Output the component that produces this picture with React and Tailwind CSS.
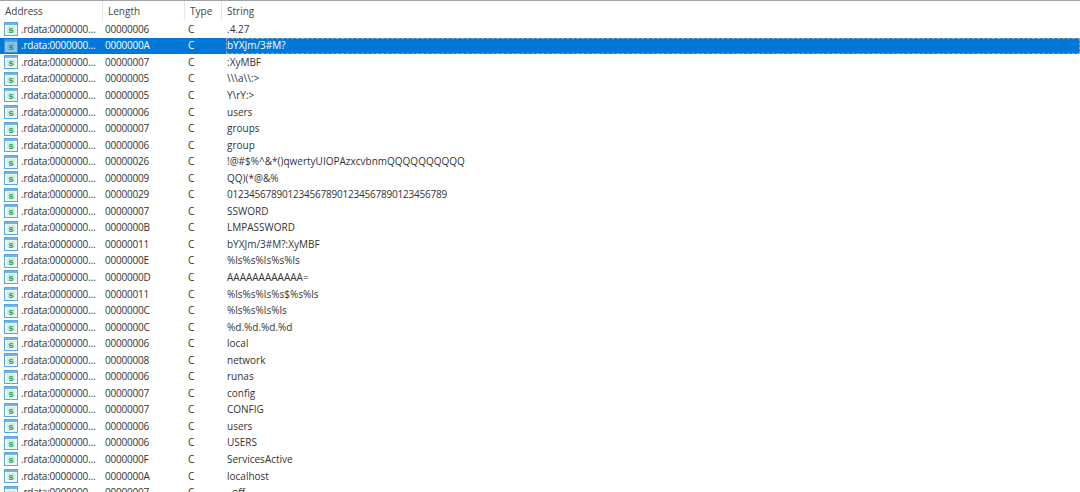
const rows = [
  ["00000006", ".4.27"],
  ["0000000A", "bYXJm/3#M?"],
  ["00000007", ":XyMBF"],
  ["00000005", "\\\\\\a\\\\:>"],
  ["00000005", "Y\\rY:>"],
  ["00000006", "users"],
  ["00000007", "groups"],
  ["00000006", "group"],
  ["00000026", "!@#$%^&*()qwertyUIOPAzxcvbnmQQQQQQQQQQ"],
  ["00000009", "QQ)(*@&%"],
  ["00000029", "0123456789012345678901234567890123456789"],
  ["00000007", "SSWORD"],
  ["0000000B", "LMPASSWORD"],
  ["00000011", "bYXJm/3#M?:XyMBF"],
  ["0000000E", "%ls%s%ls%s%ls"],
  ["0000000D", "AAAAAAAAAAAA="],
  ["00000011", "%ls%s%ls%s$%s%ls"],
  ["0000000C", "%ls%s%ls%ls"],
  ["0000000C", "%d.%d.%d.%d"],
  ["00000006", "local"],
  ["00000008", "network"],
  ["00000006", "runas"],
  ["00000007", "config"],
  ["00000007", "CONFIG"],
  ["00000006", "users"],
  ["00000006", "USERS"],
  ["0000000F", "ServicesActive"],
  ["0000000A", "localhost"],
  ["00000007", "..off"],
]

function StringIcon({ selected }) {
  return (
    <svg width="14" height="14" viewBox="0 0 14 14" className={`shrink-0 ${selected ? "opacity-60" : ""}`}>
      <rect x="0.5" y="0.5" width="13" height="13" fill="#eef8f6" stroke="#5ba6dc" />
      <rect x="1" y="1" width="12" height="2" fill="#6fb5e3" />
      <rect x="3" y="4" width="8" height="7" fill="#d5ecd8" />
      <text x="7" y="10.5" textAnchor="middle" fontSize="9" fontWeight="700" fill="#2c9a48" fontFamily="Liberation Sans, sans-serif">s</text>
    </svg>
  )
}

function HeaderCell({ className, children }) {
  return <div className={`h-full flex items-center pl-[5px] border-r border-[#e5e5e5] ${className}`}>{children}</div>
}

export default function App() {
  return (
    <div className="w-[1080px] h-[492px] overflow-hidden bg-white text-[10px] text-[#333333] font-['Open_Sans',sans-serif]">
      <div className="h-[21px] flex border-t border-[#a0a4a8] text-[#444444]">
        <HeaderCell className="w-[103px]">Address</HeaderCell>
        <HeaderCell className="w-[82px]">Length</HeaderCell>
        <HeaderCell className="w-[37px]">Type</HeaderCell>
        <div className="flex items-center pl-[5px]">String</div>
      </div>
      {rows.map(([length, text], i) => (
        <div
          key={i}
          className={`h-[16.56px] flex items-center whitespace-nowrap ${i === 1 ? "bg-[#0078d7] text-white" : ""}`}
        >
          <div className="w-[103px] flex items-center gap-[3px] pl-[4px]">
            <StringIcon selected={i === 1} />
            <span className="tracking-[-0.22px]">.rdata:0000000...</span>
          </div>
          <div className="w-[82px] pl-[2px] tracking-[-0.22px]">{length}</div>
          <div className="w-[41px] pl-[3px]">C</div>
          <div
            className={`flex-1 h-full flex items-center ${i === 1 ? "border border-dashed border-[#9aa0a6]" : "pl-[1px]"} ${i === 10 ? "tracking-[-0.22px]" : ""}`}
          >
            {text}
          </div>
        </div>
      ))}
    </div>
  )
}
